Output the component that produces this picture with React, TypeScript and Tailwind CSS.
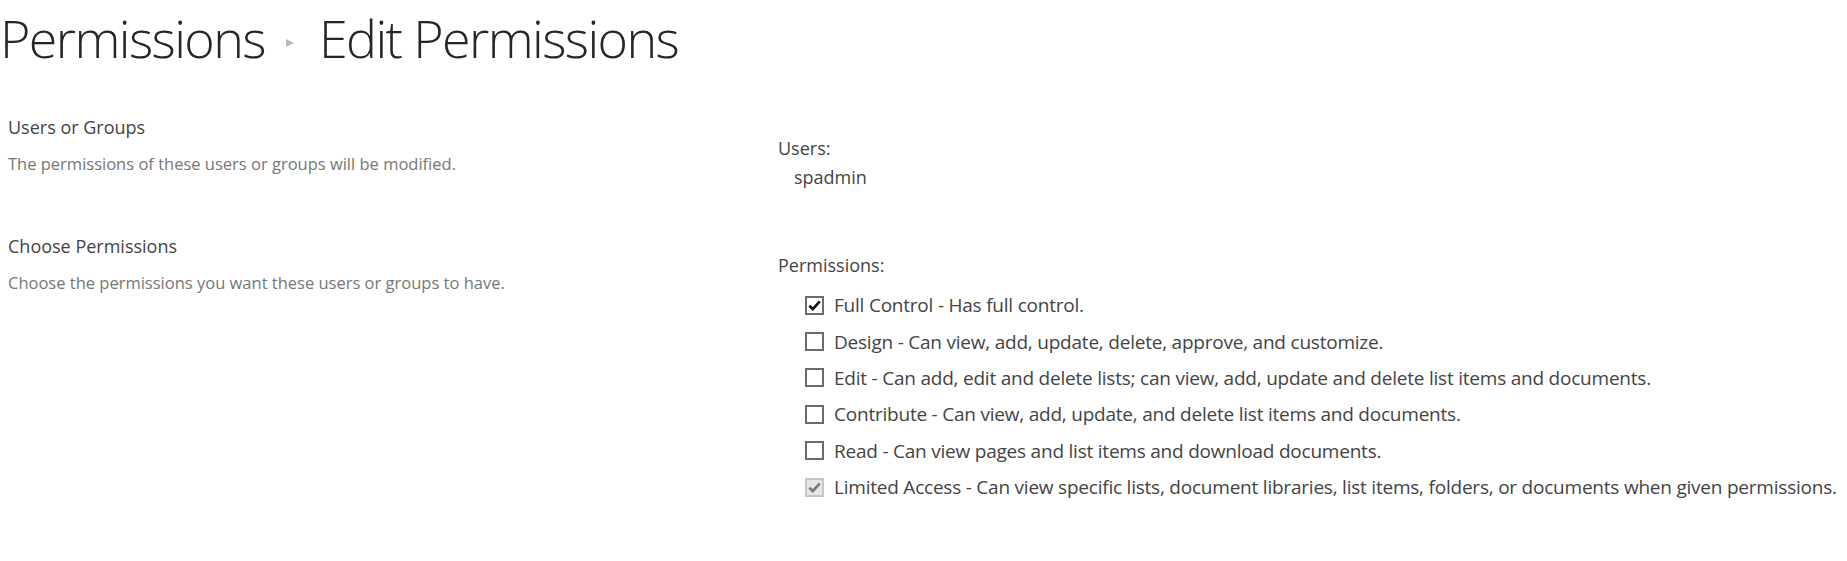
const permissions = [
  { label: "Full Control - Has full control.", checked: true },
  { label: "Design - Can view, add, update, delete, approve, and customize.", checked: false },
  {
    label: "Edit - Can add, edit and delete lists; can view, add, update and delete list items and documents.",
    checked: false,
  },
  { label: "Contribute - Can view, add, update, and delete list items and documents.", checked: false },
  { label: "Read - Can view pages and list items and download documents.", checked: false },
  {
    label:
      "Limited Access - Can view specific lists, document libraries, list items, folders, or documents when given permissions.",
    checked: true,
    disabled: true,
  },
];

function Check({ checked, disabled }: { checked: boolean; disabled?: boolean }) {
  return (
    <span
      className={
        disabled
          ? "flex h-[19px] w-[19px] shrink-0 items-center justify-center border-2 border-[#c6c6c6] bg-[#e6e6e6]"
          : "flex h-[19px] w-[19px] shrink-0 items-center justify-center border-2 border-[#6b6b6b] bg-white"
      }
    >
      {checked && (
        <svg viewBox="0 0 16 16" className="h-[15px] w-[15px]">
          <path
            d="M2.5 8.2 L6.2 11.8 L13.6 3.6"
            fill="none"
            stroke={disabled ? "#7a7a7a" : "#111"}
            strokeWidth="2.8"
          />
        </svg>
      )}
    </span>
  );
}

export default function App() {
  return (
    <div className="min-h-[561px] bg-white font-['Open_Sans',sans-serif] text-[#444]">
      <h1 className="flex items-center pt-[6px] text-[52px] leading-[64px] font-light tracking-[-1.6px] text-[#262626]">
        <span>Permissions</span>
        <svg viewBox="0 0 8 8" className="mr-[25px] ml-[21px] mt-[10px] h-[8px] w-[8px]">
          <path d="M0 0 L8 4 L0 8 Z" fill="#bcbcbc" />
        </svg>
        <span>Edit Permissions</span>
      </h1>

      <div className="mt-[45px] grid grid-cols-[778px_1fr]">
        <div className="pl-[8px]">
          <div className="text-[18px] leading-[24px] text-[#444]">Users or Groups</div>
          <div className="mt-[13px] text-[16.5px] leading-[24px] text-[#777]">
            The permissions of these users or groups will be modified.
          </div>
        </div>
        <div className="pt-[21px]">
          <div className="text-[18px] leading-[24px] text-[#444]">Users:</div>
          <div className="mt-[5px] pl-[16px] text-[18px] leading-[24px] text-[#444]">spadmin</div>
        </div>

        <div className="mt-[45px] pl-[8px]">
          <div className="text-[18px] leading-[24px] text-[#444]">Choose Permissions</div>
          <div className="mt-[13px] text-[16.5px] leading-[24px] text-[#777]">
            Choose the permissions you want these users or groups to have.
          </div>
        </div>
        <div className="mt-[64px]">
          <div className="text-[18px] leading-[24px] text-[#444]">Permissions:</div>
          <div className="mt-[10px] pl-[27px]">
            {permissions.map((p) => (
              <label key={p.label} className="flex h-[36.4px] items-center gap-[10px]">
                <Check checked={p.checked} disabled={p.disabled} />
                <span className="text-[19px] leading-[28px] tracking-[-0.22px] whitespace-nowrap text-[#444]">
                  {p.label}
                </span>
              </label>
            ))}
          </div>
        </div>
      </div>
    </div>
  );
}
